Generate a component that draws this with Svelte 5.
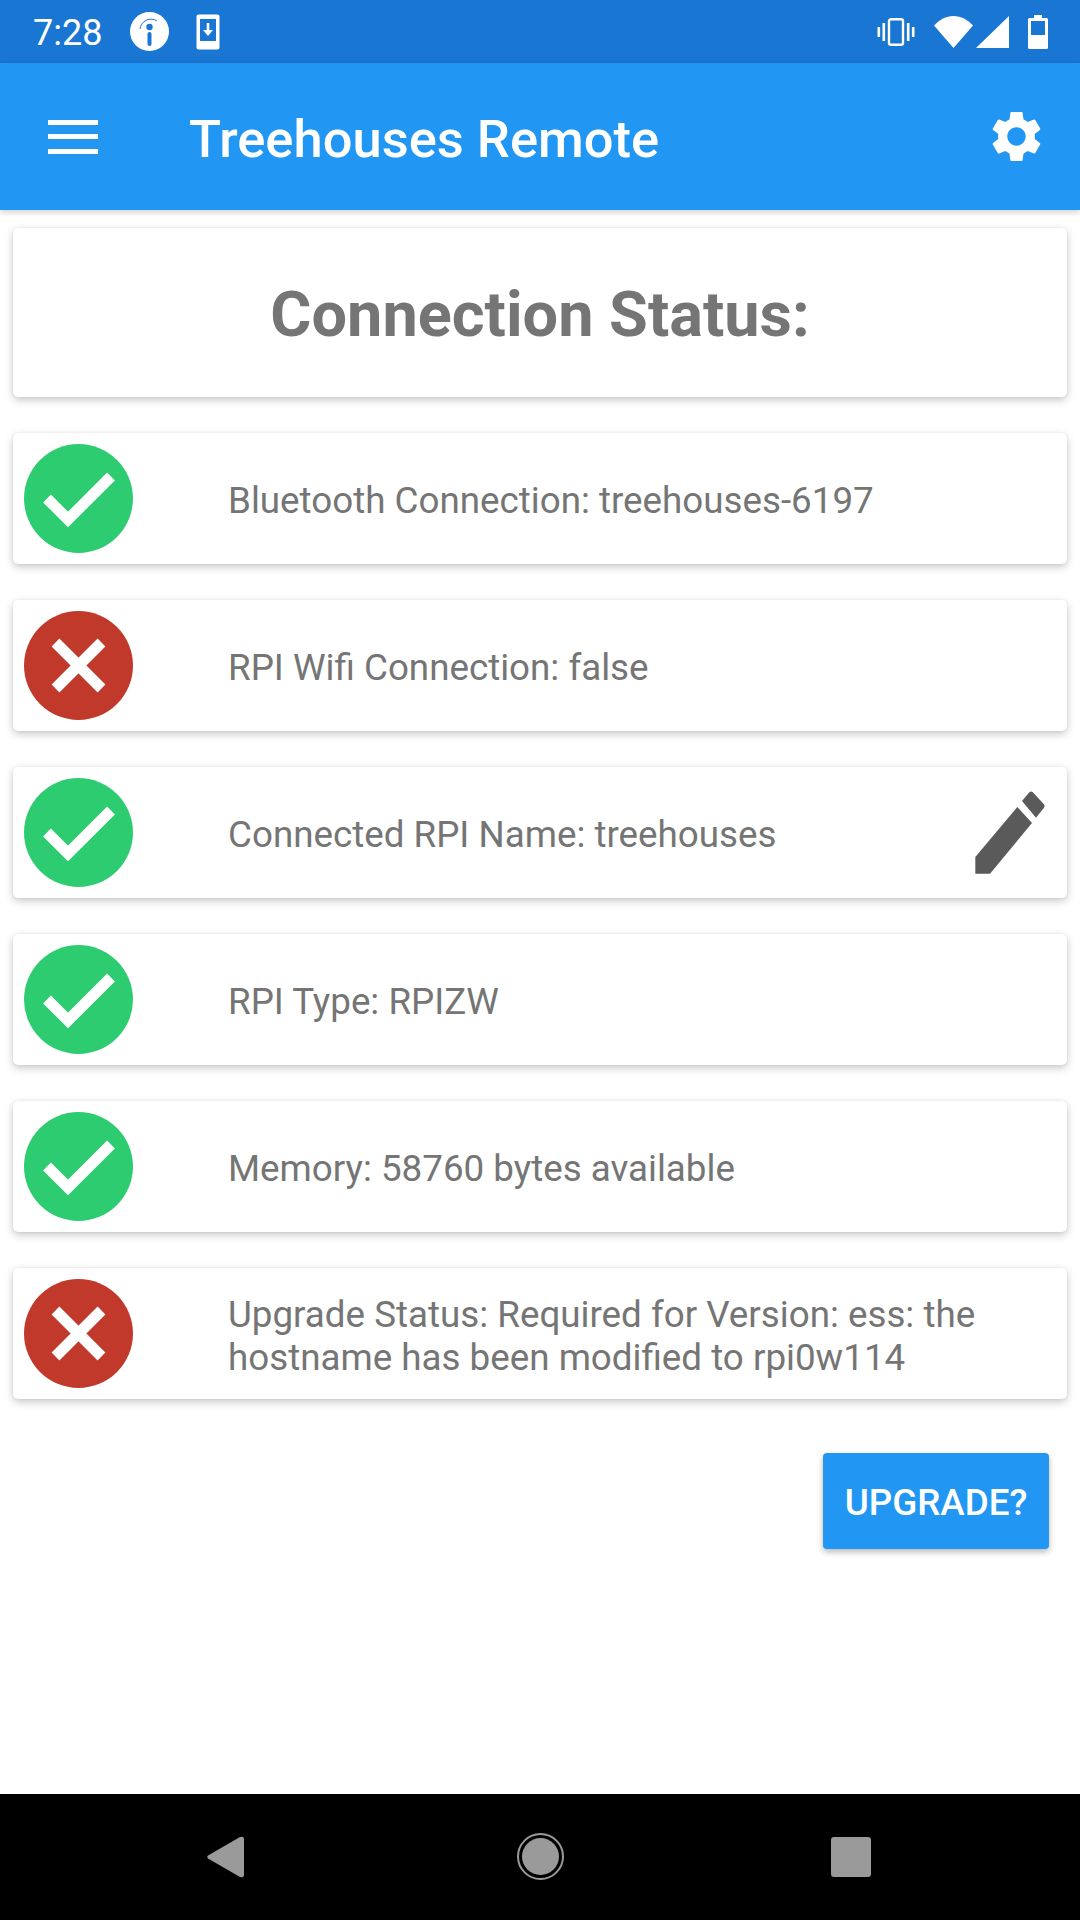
<script>
  const rows = [
    { ok: true, text: 'Bluetooth Connection: treehouses-6197' },
    { ok: false, text: 'RPI Wifi Connection: false' },
    { ok: true, text: 'Connected RPI Name: treehouses', edit: true },
    { ok: true, text: 'RPI Type: RPIZW' },
    { ok: true, text: 'Memory: 58760 bytes available' },
    { ok: false, text: 'Upgrade Status: Required for Version: ess: the hostname has been modified to rpi0w114' }
  ];
</script>

<div class="screen">
  <div class="statusbar">
    <span class="time">7:28</span>
    <svg class="ic-info" viewBox="0 0 39 39">
      <circle cx="19.5" cy="19.5" r="19.5" fill="#fff" />
      <circle cx="19.5" cy="15" r="3.2" fill="#1976d2" />
      <rect x="17.5" y="20" width="4" height="14" rx="2" fill="#1976d2" />
      <path d="M10 17 A 11 11 0 0 1 27 9" fill="none" stroke="#1976d2" stroke-width="1" />
    </svg>
    <svg class="ic-dl" viewBox="0 0 24 36">
      <rect x="0.5" y="0.5" width="23" height="35" rx="2" fill="#fff" />
      <rect x="4" y="5" width="16" height="22" fill="#1976d2" />
      <path d="M10.7 9h2.6v7h3.7L12 22l-5-6h3.7z" fill="#fff" />
    </svg>
    <div class="status-right">
      <svg class="ic-vib" viewBox="0 0 38 28">
        <rect x="12" y="1.2" width="14" height="25.6" rx="2" fill="none" stroke="#fff" stroke-width="2.4" />
        <rect x="0.5" y="9" width="2.6" height="10" fill="#fff" />
        <rect x="5.5" y="5" width="2.6" height="18" fill="#fff" />
        <rect x="29.9" y="5" width="2.6" height="18" fill="#fff" />
        <rect x="34.9" y="9" width="2.6" height="10" fill="#fff" />
      </svg>
      <svg class="ic-wifi" viewBox="0 0 39 32">
        <path d="M19.5 32L0 9.5C5.5 3.6 12 0 19.5 0S33.500 3.600 39 9.500z" fill="#fff" />
      </svg>
      <svg class="ic-signal" viewBox="0 0 33 32">
        <path d="M0 32L33 0v32z" fill="#fff" />
      </svg>
      <svg class="ic-batt" viewBox="0 0 20 34">
        <path d="M6 0h8v3h4.500a1.500 1.500 0 0 1 1.500 1.500V32.500a1.500 1.500 0 0 1-1.500 1.500H1.500A1.500 1.500 0 0 1 0 32.500V4.500A1.500 1.500 0 0 1 1.500 3H6z" fill="#fff" />
        <rect x="3" y="6" width="14" height="14" fill="#1976d2" />
      </svg>
    </div>
  </div>

  <header class="appbar">
    <div class="burger"><i></i><i></i><i></i></div>
    <h1>Treehouses Remote</h1>
    <svg class="gear" viewBox="2.4 2 19.2 20" preserveAspectRatio="none">
      <path fill="#fff" d="M19.14 12.94c.04-.3.06-.61.06-.94 0-.32-.02-.64-.07-.94l2.03-1.58c.18-.14.23-.41.12-.61l-1.92-3.32c-.12-.22-.37-.29-.59-.22l-2.39.96c-.5-.38-1.030-.7-1.620-.94l-.36-2.540c-.04-.24-.24-.41-.48-.41h-3.840c-.24 0-.43.17-.47.41l-.36 2.540c-.59.24-1.130.57-1.620.94l-2.390-.96c-.22-.08-.47 0-.59.22L2.740 8.870c-.12.21-.08.47.12.61l2.030 1.580c-.05.3-.09.63-.09.94s.02.64.07.94l-2.030 1.580c-.18.14-.23.41-.12.61l1.920 3.320c.12.22.37.29.59.22l2.390-.96c.5.38 1.030.7 1.620.94l.36 2.540c.05.24.24.41.48.41h3.840c.24 0 .44-.17.47-.41l.36-2.540c.59-.24 1.130-.56 1.620-.94l2.390.96c.22.08.47 0 .59-.22l1.920-3.320c.12-.22.07-.47-.12-.61l-2.010-1.580zM12 15.600c-1.980 0-3.600-1.620-3.600-3.600s1.620-3.600 3.600-3.600 3.600 1.620 3.600 3.600-1.620 3.600-3.600 3.600z" />
    </svg>
  </header>

  <main class="content">
    <div class="card heading"><h2>Connection Status:</h2></div>
    {#each rows as row}
      <div class="card row">
        <svg class="state" viewBox="0 0 109 109">
          {#if row.ok}
            <circle cx="54.5" cy="54.500" r="54.500" fill="#2ecc71" />
            <path d="M23 54.500l21 21 43-43" fill="none" stroke="#fff" stroke-width="11" />
          {:else}
            <circle cx="54.500" cy="54.500" r="54.500" fill="#c0392b" />
            <path d="M31.500 31.500l46 46M77.500 31.500l-46 46" fill="none" stroke="#fff" stroke-width="11" />
          {/if}
        </svg>
        <p>{row.text}</p>
        {#if row.edit}
          <svg class="pencil" viewBox="226 92 208 249">
            <path fill="#5a5a5a" d="M226 290L352 140l44 48-126 152h-44z" />
            <path fill="#5a5a5a" d="M366 122l22-26q5-5 10-1l33 36q5 6 1 11l-24 30z" />
          </svg>
        {/if}
      </div>
    {/each}
    <div class="actions"><button>UPGRADE?</button></div>
  </main>

  <nav class="navbar">
    <svg class="nav-back" viewBox="0 0 37 42">
      <path fill="#9a9a9a" d="M1 19.500L33 1q4-1 4 2v36q0 3-4 2L1 22.500q-1.500-1.500 0-3z" />
    </svg>
    <svg class="nav-home" viewBox="0 0 47 47">
      <circle cx="23.500" cy="23.500" r="22.500" fill="none" stroke="#9a9a9a" stroke-width="2" />
      <circle cx="23.500" cy="23.500" r="18.500" fill="#9a9a9a" />
    </svg>
    <div class="nav-recent"></div>
  </nav>
</div>

<style>
  :global(body) {
    margin: 0;
    background: #fff;
  }
  .screen {
    width: 1080px;
    height: 1920px;
    display: flex;
    flex-direction: column;
    overflow: hidden;
    font-family: Roboto, sans-serif;
    background: #fff;
  }
  .statusbar {
    height: 63px;
    flex: none;
    background: #1976d2;
    display: flex;
    align-items: center;
    padding-left: 33px;
    padding-right: 32px;
    color: #fff;
  }
  .time {
    font-size: 36px;
    font-weight: 400;
    width: 97px;
    position: relative;
    top: 1px;
  }
  .ic-info {
    width: 39px;
    height: 39px;
  }
  .ic-dl {
    width: 24px;
    height: 36px;
    margin-left: 27px;
  }
  .status-right {
    margin-left: auto;
    display: flex;
    align-items: center;
  }
  .ic-vib {
    width: 38px;
    height: 28px;
  }
  .ic-wifi {
    width: 39px;
    height: 32px;
    margin-left: 19px;
  }
  .ic-signal {
    width: 33px;
    height: 32px;
    margin-left: 3px;
  }
  .ic-batt {
    width: 20px;
    height: 34px;
    margin-left: 19px;
  }
  .appbar {
    height: 147px;
    flex: none;
    background: #2196f3;
    display: flex;
    align-items: center;
    padding: 0 39px 0 48px;
    box-shadow: 0 2px 6px rgba(0, 0, 0, 0.2);
    position: relative;
  }
  .burger {
    width: 50px;
    display: flex;
    flex-direction: column;
    gap: 9.500px;
  }
  .burger i {
    display: block;
    height: 5px;
    background: #fff;
  }
  h1 {
    margin: 4px 0 0 91px;
    color: #fff;
    font-size: 52.500px;
    font-weight: 500;
    flex: 1;
  }
  .gear {
    width: 49px;
    height: 51px;
  }
  .content {
    flex: 1;
    display: flex;
    flex-direction: column;
    gap: 36px;
    padding: 18px 13px 0;
  }
  .card {
    background: #fff;
    border-radius: 5px;
    box-shadow: 0 3px 8px rgba(0, 0, 0, 0.22), 0 0 2px rgba(0, 0, 0, 0.08);
  }
  .heading {
    height: 169px;
    display: flex;
    align-items: center;
    justify-content: center;
  }
  h2 {
    margin: 4px 0 0;
    font-size: 63px;
    font-weight: 700;
    color: #757575;
  }
  .row {
    height: 131px;
    display: flex;
    align-items: center;
    padding-left: 11px;
    position: relative;
  }
  .state {
    width: 109px;
    height: 109px;
    flex: none;
  }
  .row p {
    margin: 4px 0 0 95px;
    font-size: 36.750px;
    line-height: 43px;
    color: #757575;
    width: 780px;
  }
  .pencil {
    position: absolute;
    right: 22px;
    top: 24px;
    width: 70px;
    height: 83px;
  }
  .actions {
    display: flex;
    justify-content: flex-end;
    padding-right: 18px;
    margin-top: 18px;
  }
  button {
    width: 226px;
    height: 96px;
    background: #2196f3;
    border: none;
    border-radius: 4px;
    color: #fff;
    font-family: Roboto, sans-serif;
    font-size: 36.750px;
    font-weight: 500;
    padding: 2px 0 0;
    box-shadow: 0 3px 6px rgba(0, 0, 0, 0.28);
  }
  .navbar {
    height: 126px;
    flex: none;
    background: #000;
    position: relative;
  }
  .nav-back {
    position: absolute;
    left: 207px;
    top: 42px;
    width: 37px;
    height: 42px;
  }
  .nav-home {
    position: absolute;
    left: 517px;
    top: 39px;
    width: 47px;
    height: 47px;
  }
  .nav-recent {
    position: absolute;
    left: 831px;
    top: 43px;
    width: 40px;
    height: 40px;
    border-radius: 3px;
    background: #9a9a9a;
  }
</style>
